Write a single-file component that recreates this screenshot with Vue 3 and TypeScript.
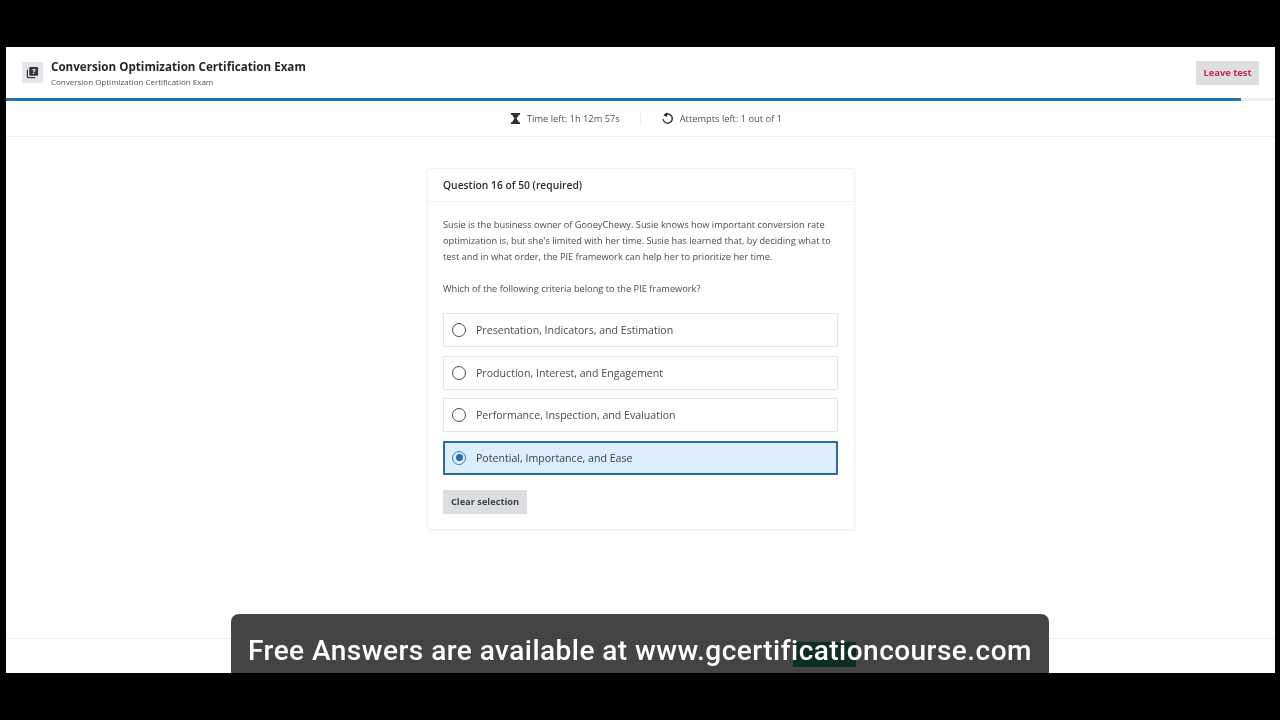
<script setup lang="ts">
const options = [
  { label: 'Presentation, Indicators, and Estimation', selected: false },
  { label: 'Production, Interest, and Engagement', selected: false },
  { label: 'Performance, Inspection, and Evaluation', selected: false },
  { label: 'Potential, Importance, and Ease', selected: true },
]
</script>

<template>
  <div class="page">
    <div class="screen">
      <header class="top soft">
        <div class="brand">
          <span class="logo">
            <svg width="13" height="13" viewBox="0 0 14 14">
              <path d="M1.5 4v7.5a1 1 0 0 0 1 1H10" fill="none" stroke="#3a3f45" stroke-width="1.4" />
              <rect x="3.5" y="1" width="9.5" height="9.5" rx="1" fill="#2f3439" />
              <text x="8.25" y="8.6" class="logo-q">?</text>
            </svg>
          </span>
          <div class="titles">
            <div class="title">Conversion Optimization Certification Exam</div>
            <div class="subtitle">Conversion Optimization Certification Exam</div>
          </div>
        </div>
        <button class="leave">Leave test</button>
      </header>
      <div class="progress"><div class="progress-fill"></div></div>
      <div class="info soft">
        <div class="info-item">
          <svg width="11" height="13" viewBox="0 0 12 13">
            <path d="M1 0.5h10v2H9.8L7.2 6.5l2.6 4H11v2H1v-2h1.2l2.6-4-2.6-4H1z" fill="#2b2f33" />
          </svg>
          <span>Time left: 1h 12m 57s</span>
        </div>
        <div class="divider"></div>
        <div class="info-item">
          <svg width="13" height="13" viewBox="0 0 13 13">
            <path d="M3.3 3.4a4.6 4.6 0 1 1-1.2 3.8" fill="none" stroke="#2b2f33" stroke-width="1.4" />
            <path d="M6.2 0.3v5L2.4 3.1z" fill="#2b2f33" />
          </svg>
          <span>Attempts left: 1 out of 1</span>
        </div>
      </div>
      <main class="main soft">
        <section class="card">
          <div class="card-head">Question 16 of 50 (required)</div>
          <div class="card-body">
            <p class="question">Susie is the business owner of GooeyChewy. Susie knows how important conversion rate<br />optimization is, but she's limited with her time. Susie has learned that, by deciding what to<br />test and in what order, the PIE framework can help her to prioritize her time.</p>
            <p class="question ask">Which of the following criteria belong to the PIE framework?</p>
            <div class="options">
              <div v-for="o in options" :key="o.label" class="option" :class="{ selected: o.selected }">
                <span class="radio"><span v-if="o.selected" class="dot"></span></span>
                <span>{{ o.label }}</span>
              </div>
            </div>
            <button class="clear">Clear selection</button>
          </div>
        </section>
      </main>
      <footer class="foot"><span class="next"></span></footer>
      <div class="caption">Free Answers are available at www.gcertificationcourse.com</div>
    </div>
  </div>
</template>

<style>
html, body { margin: 0; background: #000; }
</style>

<style scoped>
.page {
  width: 1280px;
  height: 720px;
  background: #000;
  padding: 47px 5px 47px 6px;
  box-sizing: border-box;
  overflow: hidden;
  font-family: "Open Sans", sans-serif;
}
.screen {
  position: relative;
  height: 626px;
  background: #fff;
  display: flex;
  flex-direction: column;
  overflow: hidden;
}
.soft { filter: blur(0.35px); }
.top {
  height: 51px;
  flex: none;
  display: flex;
  align-items: center;
  justify-content: space-between;
  padding: 0 16px;
}
.brand { display: flex; align-items: center; gap: 8px; }
.logo {
  width: 21px;
  height: 21px;
  background: #e4e6e9;
  display: flex;
  align-items: center;
  justify-content: center;
}
.logo-q { font: 700 8px "Open Sans", sans-serif; fill: #fff; text-anchor: middle; }
.titles { display: flex; flex-direction: column; padding-top: 2px; }
.title { font-size: 11.63px; line-height: 16px; font-weight: 700; color: #23282d; }
.subtitle { font-size: 8px; line-height: 13px; color: #4f555b; }
.leave {
  width: 63px;
  height: 24px;
  border: 0;
  padding: 0;
  background: #dcdee2;
  color: #c8264f;
  font: 700 9.4px "Open Sans", sans-serif;
}
.progress { height: 3px; flex: none; background: #eceef0; }
.progress-fill { width: 1235px; height: 100%; background: #1f6fb2; }
.info {
  height: 36px;
  flex: none;
  display: flex;
  align-items: center;
  justify-content: center;
  border-bottom: 1px solid #eeeff1;
  font-size: 9.3px;
  color: #4a5056;
  box-sizing: border-box;
  padding: 0 0 1px 11px;
}
.info-item { display: flex; align-items: center; gap: 6px; }
.divider { width: 1px; height: 14px; background: #eceef0; margin: 0 20px; }
.main { flex: 1; display: flex; justify-content: center; padding: 31px 0 0 1px; }
.card {
  width: 428px;
  height: 362px;
  box-sizing: border-box;
  border: 1px solid #f0f1f2;
  border-radius: 2px;
  box-shadow: 0 1px 2px rgba(0, 0, 0, 0.04);
}
.card-head {
  height: 33px;
  box-sizing: border-box;
  padding-left: 15px;
  display: flex;
  align-items: center;
  font-size: 10.3px;
  font-weight: 600;
  color: #2a2f34;
  border-bottom: 1px solid #f2f3f4;
}
.card-body { padding: 15px 16px 0 15px; }
.question { margin: 0; font-size: 9.26px; line-height: 16px; color: #464c52; white-space: nowrap; }
.ask { margin-top: 16px; }
.options { display: flex; flex-direction: column; gap: 8.6px; margin-top: 16px; }
.option {
  height: 34px;
  box-sizing: border-box;
  border: 1px solid #e3e5e7;
  border-radius: 1px;
  display: flex;
  align-items: center;
  gap: 10px;
  padding-left: 8px;
  font-size: 10.6px;
  color: #484d53;
}
.option.selected {
  background: #dceefd;
  border: 2px solid #2b6a9e;
  padding-left: 7px;
  color: #3d4349;
}
.radio {
  width: 14px;
  height: 14px;
  flex: none;
  box-sizing: border-box;
  border: 1.7px solid #43484d;
  border-radius: 50%;
  display: flex;
  align-items: center;
  justify-content: center;
}
.selected .radio { border-color: #2f7fc1; }
.dot { width: 7px; height: 7px; border-radius: 50%; background: #1f6fb2; }
.clear {
  display: block;
  margin-top: 15px;
  width: 84px;
  height: 24px;
  border: 0;
  padding: 0;
  background: #dcdee0;
  color: #3f4449;
  font: 700 9.25px "Open Sans", sans-serif;
}
.foot {
  height: 35px;
  flex: none;
  border-top: 1px solid #eeeff1;
  display: flex;
  justify-content: center;
  box-sizing: border-box;
}
.next { width: 63px; height: 25px; margin: 3px 0 0 367px; background: #2aa87e; }
.caption {
  position: absolute;
  left: 225px;
  top: 567px;
  width: 818px;
  height: 59px;
  box-sizing: border-box;
  padding: 20px 0 0 17px;
  background: rgba(6, 6, 6, 0.75);
  border-radius: 8px 8px 0 0;
  color: #fff;
  font: 500 28px/34px Roboto, sans-serif;
  letter-spacing: 0.47px;
  white-space: nowrap;
}
</style>
